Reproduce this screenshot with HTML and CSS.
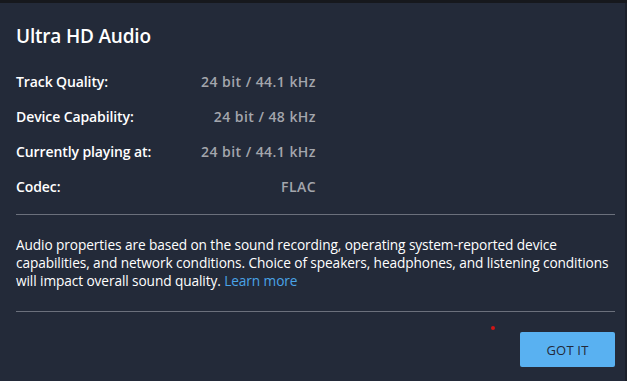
FILE: index.html
```html
<!DOCTYPE html>
<html lang="en">
<head>
    <meta charset="UTF-8">
    <meta name="viewport" content="width=device-width, initial-scale=1.0">
    <link rel="stylesheet" href="styles.css">
    <title>Ultra HD Audio</title>
</head>
<body>
    <div class="topbar"></div>
    <div class="dialog">
        <h1 class="title">Ultra HD Audio</h1>
        <div class="specs">
            <div class="label">Track Quality:</div>
            <div class="value">24 bit / 44.1 kHz</div>
            <div class="label">Device Capability:</div>
            <div class="value">24 bit / 48 kHz</div>
            <div class="label">Currently playing at:</div>
            <div class="value">24 bit / 44.1 kHz</div>
            <div class="label">Codec:</div>
            <div class="value">FLAC</div>
        </div>
        <hr class="divider">
        <p class="note">
            Audio properties are based on the sound recording, operating system-reported device<br>
            capabilities, and network conditions. Choice of speakers, headphones, and listening conditions<br>
            will impact overall sound quality. <a href="#" class="learn">Learn more</a>
        </p>
        <hr class="divider">
        <div class="actions">
            <span class="dot"></span>
            <button class="gotit">GOT IT</button>
        </div>
    </div>
</body>
</html>
```

FILE: styles.css
```css
html, body {
    margin: 0;
    padding: 0;
    height: 100%;
    background-color: #232a39;
    font-family: "Open Sans", "Noto Sans", sans-serif;
    color: #ffffff;
    overflow: hidden;
}
.topbar {
    height: 3px;
    background-color: #16181d;
}
.dialog {
    padding: 0 10px 0 16px;
    border-right: 2px solid #1b202b;
    height: 378px;
    box-sizing: border-box;
}
.title {
    margin: 0;
    padding-top: 21px;
    font-size: 19px;
    font-weight: 600;
    line-height: 24px;
    letter-spacing: -0.2px;
}
.specs {
    display: grid;
    grid-template-columns: 160px 140px;
    row-gap: 14px;
    margin-top: 23px;
    font-size: 14px;
    line-height: 21px;
    letter-spacing: -0.1px;
}
.label {
    font-weight: 600;
}
.value {
    text-align: right;
    color: #a3a6ad;
    font-weight: 600;
    letter-spacing: 0.45px;
}
.divider {
    border: none;
    border-top: 1px solid #6b707c;
    margin: 0;
}
.specs + .divider {
    margin-top: 17px;
}
.note {
    margin: 21px 0 21px;
    font-size: 13.7px;
    line-height: 18px;
    letter-spacing: -0.1px;
    white-space: nowrap;
}
.learn {
    color: #4aa4e8;
    text-decoration: none;
}
.actions {
    display: flex;
    justify-content: flex-end;
    position: relative;
    padding-top: 20px;
}
.gotit {
    width: 95px;
    height: 35px;
    background-color: #59b1f1;
    border: none;
    border-radius: 2px;
    color: #232a39;
    font-family: "Open Sans", "Noto Sans", sans-serif;
    font-size: 13px;
    letter-spacing: 0.2px;
}
.dot {
    position: absolute;
    left: 475px;
    top: 14px;
    width: 4px;
    height: 4px;
    border-radius: 50%;
    background-color: #d01616;
}
```
